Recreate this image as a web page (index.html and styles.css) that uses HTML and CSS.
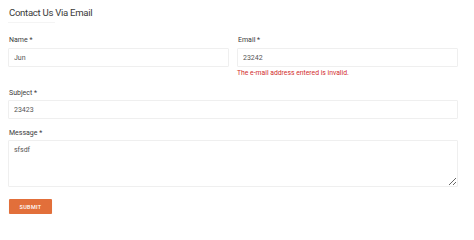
FILE: index.html
```html
<!DOCTYPE html>
<html>
<head>
<meta charset="utf-8">
<link rel="stylesheet" href="styles.css">
</head>
<body>
<div class="page">
  <h2 class="title">Contact Us Via Email</h2>
  <div class="rule"></div>
  <form class="form">
    <div class="row">
      <div class="field">
        <label class="label">Name *</label>
        <input class="input" type="text" value="Jun">
      </div>
      <div class="field">
        <label class="label">Email *</label>
        <input class="input" type="text" value="23242">
        <div class="error">The e-mail address entered is invalid.</div>
      </div>
    </div>
    <div class="field">
      <label class="label">Subject *</label>
      <input class="input" type="text" value="23423">
    </div>
    <div class="field">
      <label class="label">Message *</label>
      <textarea class="textarea">sfsdf</textarea>
    </div>
    <div class="actions">
      <button class="submit" type="button">SUBMIT</button>
    </div>
  </form>
</div>
</body>
</html>
```
FILE: styles.css
```css
html, body {
  margin: 0;
  padding: 0;
  background: #ffffff;
}
body {
  font-family: Roboto, "Liberation Sans", Arial, sans-serif;
  color: #333333;
}
.page {
  padding: 7px 16px 0 8px;
}
.title {
  margin: 0 0 0 1px;
  font-size: 9.6px;
  line-height: 12px;
  letter-spacing: -0.3px;
  font-weight: 400;
  color: #3a3a3a;
}
.rule {
  width: 47px;
  height: 1px;
  background: #f4f4f4;
  margin-top: 3px;
}
.form {
  display: flex;
  flex-direction: column;
  margin-top: 13px;
  gap: 10px;
}
.row {
  display: grid;
  grid-template-columns: 1fr 1fr;
  column-gap: 8px;
}
.field {
  display: flex;
  flex-direction: column;
}
.label {
  font-size: 7px;
  line-height: 9px;
  color: #3a3a3a;
  margin: 0 0 2px 1px;
}
.row .label {
  margin-bottom: 3px;
}
.input {
  box-sizing: border-box;
  height: 19px;
  width: 100%;
  margin: 0;
  border: 1px solid #efefef;
  border-radius: 1px;
  background: #ffffff;
  padding: 0 5px;
  font-family: Roboto, "Liberation Sans", Arial, sans-serif;
  font-size: 7px;
  color: #555555;
  outline: none;
}
.error {
  margin-top: 2px;
  margin-bottom: 1px;
  font-size: 6.8px;
  line-height: 9px;
  color: #d22c2c;
}
.textarea {
  box-sizing: border-box;
  height: 47px;
  width: 100%;
  margin: 0;
  border: 1px solid #efefef;
  border-radius: 1px;
  background: #ffffff;
  padding: 5px 5px;
  font-family: Roboto, "Liberation Sans", Arial, sans-serif;
  font-size: 7px;
  line-height: 9px;
  color: #555555;
  outline: none;
  display: block;
}
.actions {
  margin-top: 2px;
  display: flex;
}
.submit {
  width: 43px;
  height: 15px;
  margin-left: 1px;
  padding: 0;
  border: none;
  border-radius: 1px;
  background: #e26f3a;
  color: #ffffff;
  font-family: Roboto, "Liberation Sans", Arial, sans-serif;
  font-size: 5.5px;
  font-weight: 500;
  letter-spacing: 0.3px;
  box-shadow: 0 1px 1px rgba(0,0,0,0.12);
}
```
